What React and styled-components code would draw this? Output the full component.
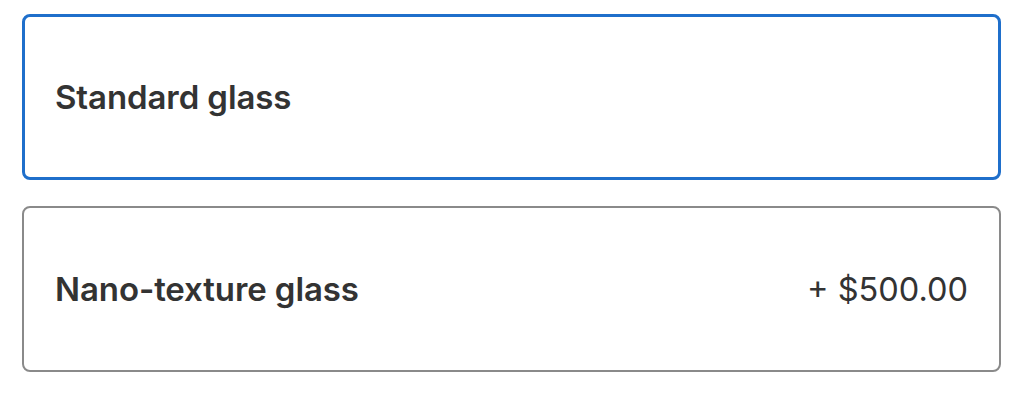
import { createGlobalStyle } from "styled-components";
import styled from "styled-components";

const GlobalStyle = createGlobalStyle`
  body {
    margin: 0;
    background: #fff;
    font-family: Inter, "Liberation Sans", Arial, sans-serif;
    color: #333;
  }
`;

const List = styled.div`
  display: flex;
  flex-direction: column;
  gap: 26px;
  padding: 14px 27px 0 22px;
`;

const Option = styled.label`
  box-sizing: border-box;
  height: 166px;
  display: flex;
  align-items: center;
  justify-content: space-between;
  padding: 0 31px 0 31px;
  border-radius: 8px;
  cursor: pointer;
  ${props => props.selected ? `
    border: 3px solid #1f6fcb;
    padding-left: 30px;
  ` : `
    border: 2px solid #8a8a8a;
  `}
`;

const Name = styled.span`
  font-size: 33px;
  font-weight: 600;
  letter-spacing: -0.1px;
  color: #333;
`;

const Price = styled.span`
  font-size: 32.5px;
  font-weight: 400;
  color: #333;
`;

const options = [
  { name: "Standard glass", price: null },
  { name: "Nano-texture glass", price: "+ $500.00" },
];

export default function App() {
  return (
    <>
      <GlobalStyle />
      <List>
        {options.map((o, i) => (
          <Option key={o.name} selected={i === 0}>
            <Name>{o.name}</Name>
            {o.price && <Price>{o.price}</Price>}
          </Option>
        ))}
      </List>
    </>
  );
}
